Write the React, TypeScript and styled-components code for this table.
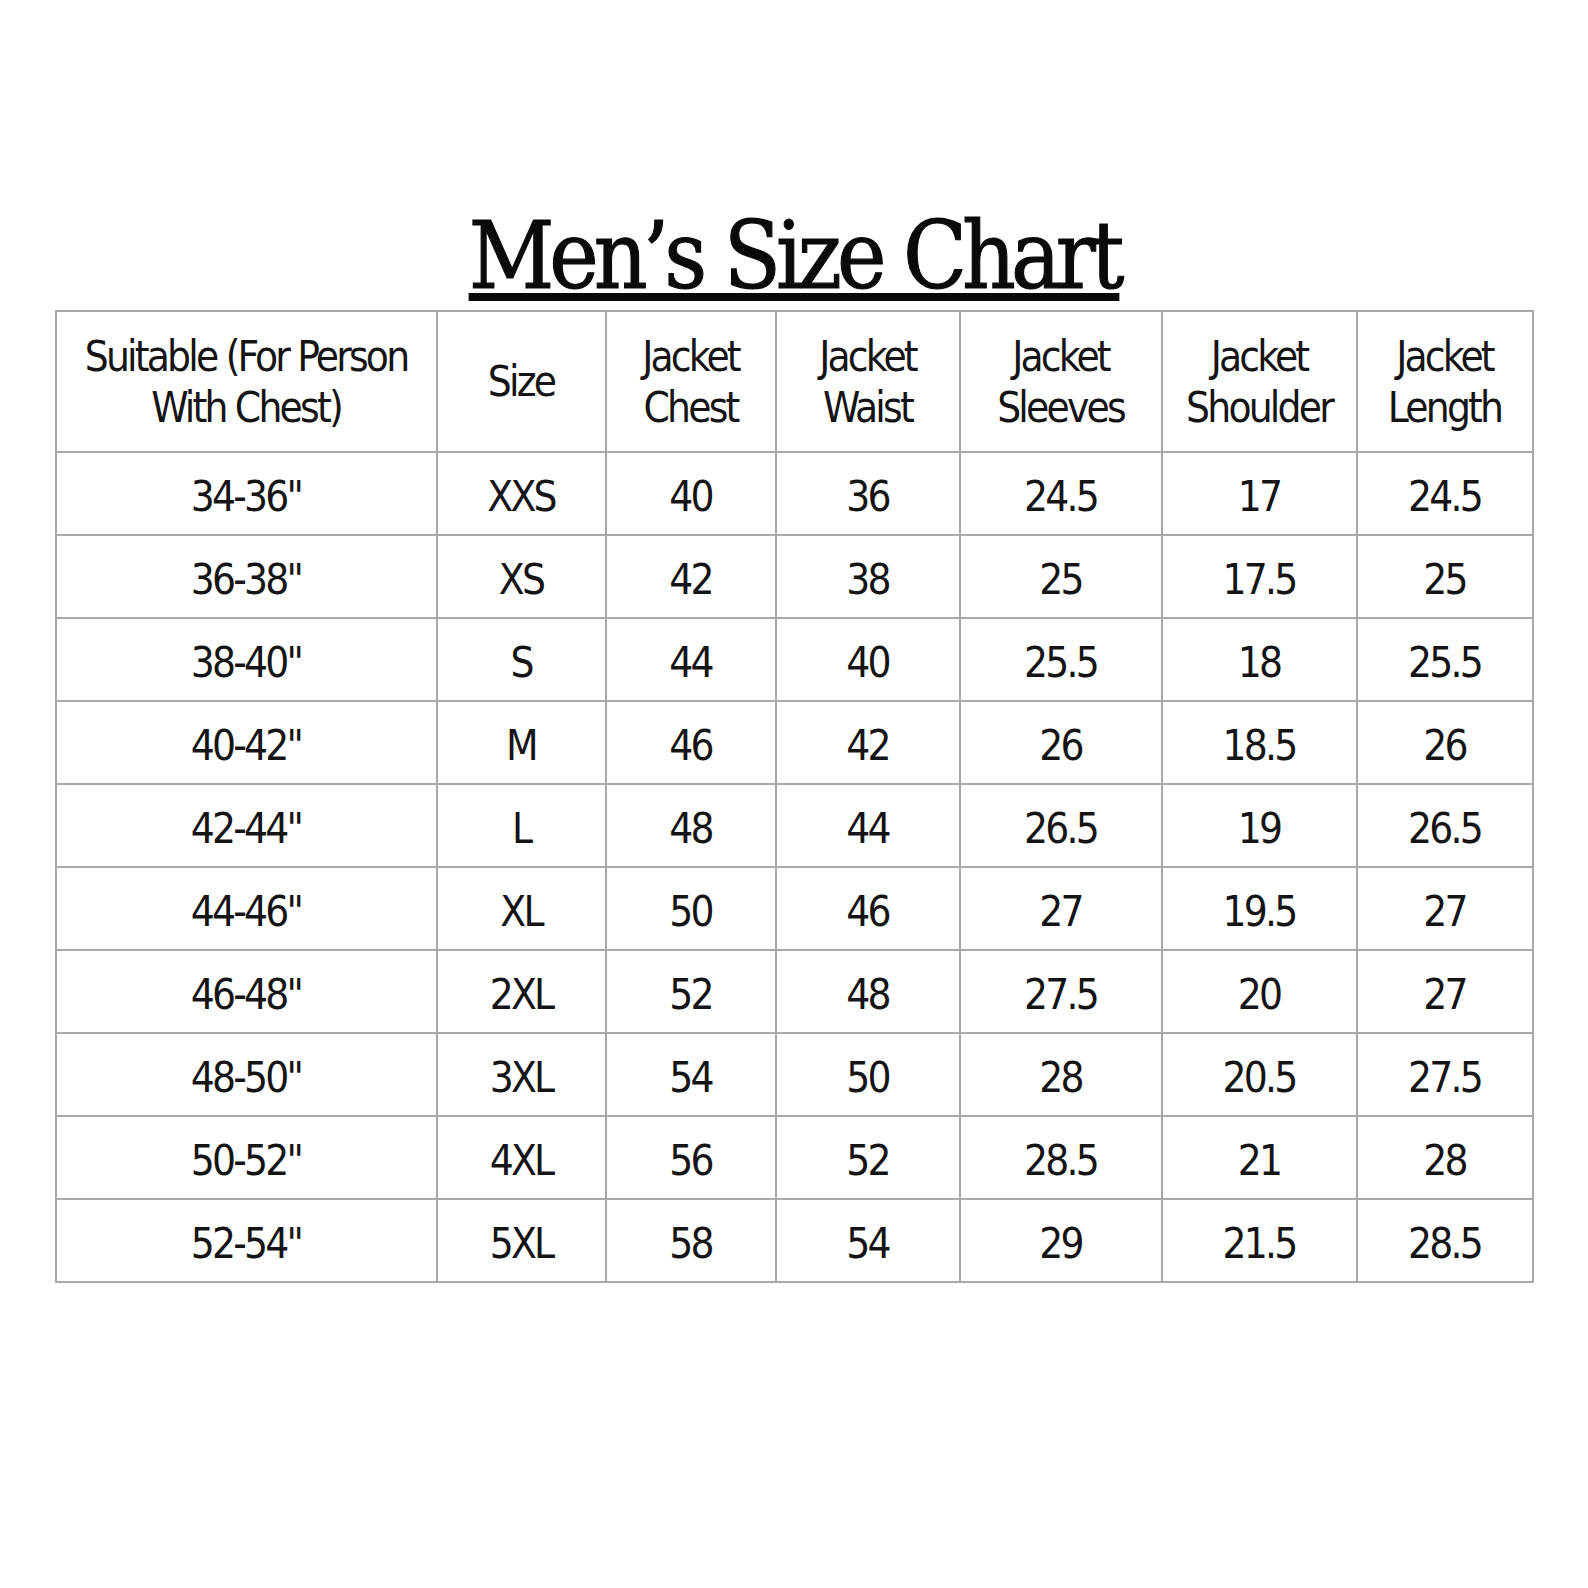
import styled, { createGlobalStyle } from "styled-components";

const GlobalStyle = createGlobalStyle`
  html, body {
    margin: 0;
    padding: 0;
    background: #ffffff;
  }
  body {
    width: 1588px;
    height: 1588px;
    overflow: hidden;
  }
`;

const Page = styled.main`
  width: 1588px;
  height: 1588px;
  box-sizing: border-box;
  padding-top: 204px;
  display: flex;
  flex-direction: column;
  align-items: center;
  background: #ffffff;
`;

const Title = styled.h1`
  margin: 0;
  font-family: "DejaVu Serif", "Liberation Serif", serif;
  font-stretch: condensed;
  font-weight: 400;
  font-size: 93px;
  line-height: 104px;
  letter-spacing: -5px;
  color: #0a0a0a;
  -webkit-text-stroke: 1.1px #0a0a0a;
  text-decoration: underline;
  text-decoration-thickness: 8px;
  text-underline-offset: 5px;
`;

const Table = styled.table`
  margin-top: 2px;
  width: 1477px;
  border-collapse: collapse;
  table-layout: fixed;
  font-family: "DejaVu Sans", "Liberation Sans", sans-serif;
  font-stretch: condensed;
  color: #141414;
`;

const HeadCell = styled.th`
  height: 139px;
  padding: 0;
  border: 2px solid #a9a9a9;
  font-weight: 400;
  font-size: 42px;
  line-height: 51px;
  letter-spacing: -2.8px;
  text-align: center;
  vertical-align: middle;
  white-space: nowrap;
`;

const Cell = styled.td`
  height: 83px;
  padding: 6px 0 0;
  border: 2px solid #a9a9a9;
  font-size: 42px;
  letter-spacing: -2.8px;
  text-align: center;
  vertical-align: middle;
  box-sizing: border-box;
`;

const widths = [381, 169, 170, 184, 202, 195, 176];

const headers = [
  ["Suitable (For Person", "With Chest)"],
  ["Size"],
  ["Jacket", "Chest"],
  ["Jacket", "Waist"],
  ["Jacket", "Sleeves"],
  ["Jacket", "Shoulder"],
  ["Jacket", "Length"],
];

const rows = [
  ["34-36\"", "XXS", "40", "36", "24.5", "17", "24.5"],
  ["36-38\"", "XS", "42", "38", "25", "17.5", "25"],
  ["38-40\"", "S", "44", "40", "25.5", "18", "25.5"],
  ["40-42\"", "M", "46", "42", "26", "18.5", "26"],
  ["42-44\"", "L", "48", "44", "26.5", "19", "26.5"],
  ["44-46\"", "XL", "50", "46", "27", "19.5", "27"],
  ["46-48\"", "2XL", "52", "48", "27.5", "20", "27"],
  ["48-50\"", "3XL", "54", "50", "28", "20.5", "27.5"],
  ["50-52\"", "4XL", "56", "52", "28.5", "21", "28"],
  ["52-54\"", "5XL", "58", "54", "29", "21.5", "28.5"],
];

export default function App() {
  return (
    <>
      <GlobalStyle />
      <Page>
        <Title>Men’s Size Chart</Title>
        <Table>
          <colgroup>
            {widths.map((w, i) => (
              <col key={i} style={{ width: w }} />
            ))}
          </colgroup>
          <thead>
            <tr>
              {headers.map((lines, i) => (
                <HeadCell key={i}>
                  {lines.map((l, j) => (
                    <div key={j}>{l}</div>
                  ))}
                </HeadCell>
              ))}
            </tr>
          </thead>
          <tbody>
            {rows.map((row, r) => (
              <tr key={r}>
                {row.map((v, c) => (
                  <Cell key={c}>{v}</Cell>
                ))}
              </tr>
            ))}
          </tbody>
        </Table>
      </Page>
    </>
  );
}
